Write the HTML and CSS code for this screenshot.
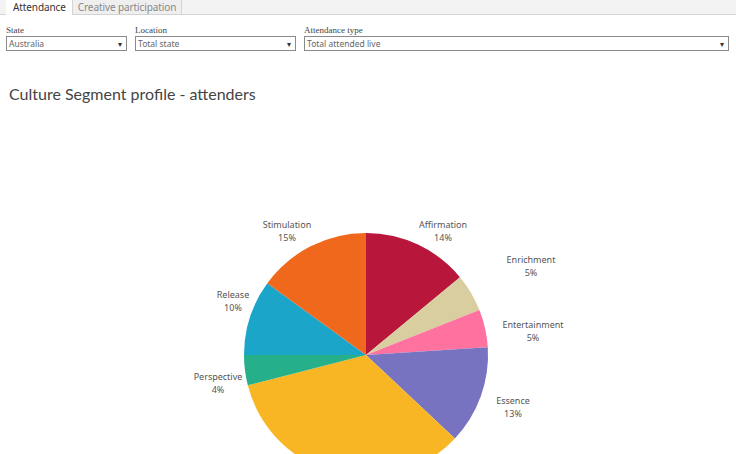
FILE: index.html
```html
<!DOCTYPE html>
<html>
<head>
  <title>Culture Segment profile</title>
  <link rel="stylesheet" href="styles.css">
</head>
<body>
  <div class="tabs">
    <div class="tab active">Attendance</div>
    <div class="tab">Creative participation</div>
  </div>

  <div class="filters">
    <div class="filter state">
      <label>State</label>
      <div class="select"><span>Australia</span><span class="arrow">&#9662;</span></div>
    </div>
    <div class="filter location">
      <label>Location</label>
      <div class="select"><span>Total state</span><span class="arrow">&#9662;</span></div>
    </div>
    <div class="filter type">
      <label>Attendance type</label>
      <div class="select"><span>Total attended live</span><span class="arrow">&#9662;</span></div>
    </div>
  </div>

  <h1>Culture Segment profile - attenders</h1>

  <svg class="chart" width="736" height="340" viewBox="0 114 736 340">
    <!-- slices, clockwise from 12 o'clock -->
    <path fill="#b8173b" d="M366 355 L366 233 A122 122 0 0 1 460.0 277.2 Z"/>
    <path fill="#d8ce9f" d="M366 355 L460.0 277.2 A122 122 0 0 1 479.4 310.1 Z"/>
    <path fill="#ff72a0" d="M366 355 L479.4 310.1 A122 122 0 0 1 487.8 347.3 Z"/>
    <path fill="#7873c0" d="M366 355 L487.8 347.3 A122 122 0 0 1 454.9 438.5 Z"/>
    <path fill="#f8b624" d="M366 355 L454.9 438.5 A122 122 0 0 1 247.8 385.3 Z"/>
    <path fill="#25b089" d="M366 355 L247.8 385.3 A122 122 0 0 1 244 355 Z"/>
    <path fill="#1ba5c8" d="M366 355 L244 355 A122 122 0 0 1 267.3 283.3 Z"/>
    <path fill="#f0681c" d="M366 355 L267.3 283.3 A122 122 0 0 1 366 233 Z"/>

    <g class="labels">
      <text x="287" y="228">Stimulation</text>
      <text x="287" y="241">15%</text>
      <text x="443" y="228">Affirmation</text>
      <text x="443" y="241">14%</text>
      <text x="531" y="263">Enrichment</text>
      <text x="531" y="276">5%</text>
      <text x="533" y="328">Entertainment</text>
      <text x="533" y="341">5%</text>
      <text x="513" y="404">Essence</text>
      <text x="513" y="417">13%</text>
      <text x="233" y="298">Release</text>
      <text x="233" y="311">10%</text>
      <text x="218" y="380">Perspective</text>
      <text x="218" y="393">4%</text>
    </g>
  </svg>
</body>
</html>
```

FILE: styles.css
```css
body {
  font-family: "Noto Sans", Arial, sans-serif;
  margin: 0;
  color: #333;
  overflow: hidden;
}

.tabs {
  display: flex;
  height: 14px;
  padding-left: 6px;
  background-color: #f3f3f3;
  border-bottom: 1px solid #d4d4d4;
}

.tab {
  font-size: 10px;
  line-height: 14px;
  padding: 0 5px;
  color: #888;
  background-color: #efefef;
  border-right: 1px solid #d4d4d4;
  letter-spacing: -0.1px;
}

.tab.active {
  color: #333;
  background-color: #fff;
  height: 15px;
  padding: 0 6px 0 7px;
}

.filters {
  display: flex;
  padding: 9px 7px 0 6px;
  gap: 8px;
}

.filter label {
  display: block;
  font-family: "Liberation Serif", serif;
  font-size: 9px;
  color: #444;
  height: 12px;
  line-height: 12px;
}

.filter.state {
  width: 121px;
}

.filter.location {
  width: 161px;
}

.filter.type {
  flex: 1;
}

.select {
  display: flex;
  justify-content: space-between;
  align-items: center;
  height: 13px;
  border: 1px solid #8a8a8a;
  font-size: 8.5px;
  color: #666;
  padding: 0 4px 0 2px;
}

.arrow {
  font-size: 8px;
  color: #333;
}

h1 {
  margin: 0;
  padding: 33px 0 0 9px;
  height: 30px;
  font-family: Lato, "Noto Sans", sans-serif;
  font-size: 16px;
  font-weight: normal;
  color: #444;
  line-height: 20px;
}

.chart {
  display: block;
}

.labels text {
  font-family: "Noto Sans", Arial, sans-serif;
  font-size: 9px;
  fill: #555;
  text-anchor: middle;
}
```
